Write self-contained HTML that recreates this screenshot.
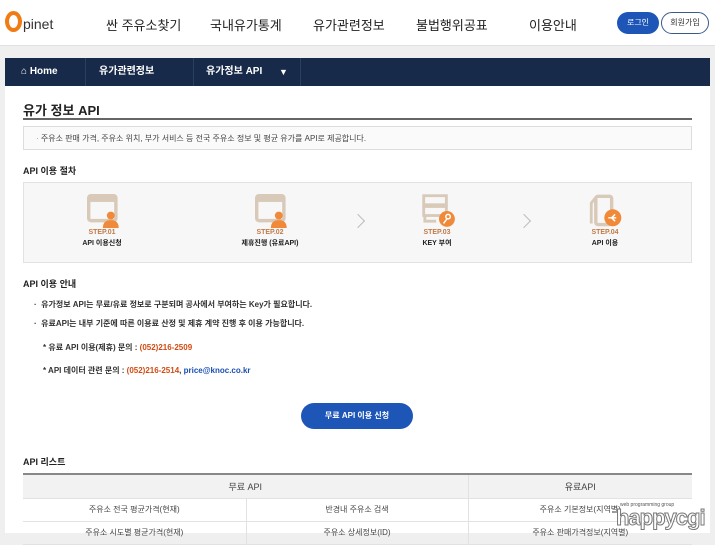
<!DOCTYPE html>
<html><head><meta charset="utf-8"><style>
*{margin:0;padding:0;box-sizing:border-box}
body{width:715px;height:533px;overflow:hidden;background:#efefef;font-family:"Liberation Sans","Noto Sans CJK KR",sans-serif;color:#222;position:relative}
.a{position:absolute}
.hdr{left:0;top:0;width:715px;height:46px;background:#fff;border-bottom:1px solid #e2e2e2}
.menu{top:15px;font-size:13px;color:#222}
.nav{left:5px;top:58px;width:705px;height:28px;background:#172a4a;color:#fff;font-size:10px;font-weight:bold}
.nav span{position:absolute;top:0;line-height:28px;height:28px}
.nav i{position:absolute;top:0;width:1px;height:28px;background:#2b3f60}
.main{left:5px;top:86px;width:705px;height:447px;background:#fff}
.step{position:absolute;width:120px;text-align:center}
.step .s{font-size:7px;color:#c27a47;font-weight:bold;margin-top:3px}
.step .l{font-size:7px;font-weight:bold;color:#222;margin-top:2px}
.chev{position:absolute;width:10px;height:10px;border-top:1px solid #bbb;border-right:1px solid #bbb;transform:rotate(45deg)}
td{border-bottom:1px solid #e2e2e2;border-right:1px solid #e2e2e2;text-align:center;font-size:8px;color:#444;height:23px;padding:0}
td:last-child{border-right:none}
</style></head><body>
<div class="a hdr"></div>
<div class="a" style="left:5px;top:11px;width:17px;height:21px;border:4px solid #f07c14;border-radius:50%"></div>
<div class="a" style="left:23px;top:16px;font-size:14px;color:#333">pinet</div>
<div class="a menu" style="left:106px">싼 주유소찾기</div>
<div class="a menu" style="left:210px">국내유가통계</div>
<div class="a menu" style="left:313px">유가관련정보</div>
<div class="a menu" style="left:416px">불법행위공표</div>
<div class="a menu" style="left:529px">이용안내</div>
<div class="a" style="left:617px;top:12px;width:42px;height:22px;border-radius:11px;background:#1e56b8;color:#fff;font-size:8px;text-align:center;line-height:22px">로그인</div>
<div class="a" style="left:661px;top:12px;width:48px;height:22px;border-radius:11px;border:1px solid #3a5a8a;background:#fff;color:#333;font-size:8px;text-align:center;line-height:20px">회원가입</div>

<div class="a nav">
<span style="left:16px">⌂ Home</span><i style="left:80px"></i>
<span style="left:94px">유가관련정보</span><i style="left:188px"></i>
<span style="left:201px">유가정보 API</span><span style="left:274px;font-size:9px">▼</span><i style="left:295px"></i>
</div>
<div class="a main"></div>

<div class="a" style="left:23px;top:100px;font-size:13px;font-weight:bold;color:#222">유가 정보 API</div>
<div class="a" style="left:23px;top:118px;width:669px;height:2px;background:#666"></div>
<div class="a" style="left:23px;top:126px;width:669px;height:24px;border:1px solid #ddd;background:#fafafa;font-size:8px;color:#444;padding:6px 0 0 12px"><span style="color:#f07c14">·</span> 주유소 판매 가격, 주유소 위치, 부가 서비스 등 전국 주유소 정보 및 평균 유가를 API로 제공합니다.</div>
<div class="a" style="left:23px;top:164px;font-size:9px;font-weight:bold">API 이용 절차</div>
<div class="a" style="left:23px;top:182px;width:669px;height:81px;border:1px solid #e2e2e2;background:#f7f7f7"></div>

<svg class="a" style="left:87px;top:194px" width="34" height="34" viewBox="0 0 30 30"><rect x="1.5" y="1.5" width="24" height="22" rx="2" fill="none" stroke="#d8c9b8" stroke-width="3"/><rect x="1" y="1" width="25" height="6" fill="#d8c9b8"/><circle cx="21" cy="19" r="3.5" fill="#f08a3a"/><path d="M14 30 Q14 23 21 23 Q28 23 28 30Z" fill="#f08a3a"/></svg>
<svg class="a" style="left:255px;top:194px" width="34" height="34" viewBox="0 0 30 30"><rect x="1.5" y="1.5" width="24" height="22" rx="2" fill="none" stroke="#d8c9b8" stroke-width="3"/><rect x="1" y="1" width="25" height="6" fill="#d8c9b8"/><circle cx="21" cy="19" r="3.5" fill="#f08a3a"/><path d="M14 30 Q14 23 21 23 Q28 23 28 30Z" fill="#f08a3a"/></svg>
<svg class="a" style="left:422px;top:194px" width="34" height="34" viewBox="0 0 30 30"><rect x="1.5" y="1.5" width="20" height="8" fill="none" stroke="#d8c9b8" stroke-width="2.5"/><rect x="1.5" y="11" width="20" height="8" fill="none" stroke="#d8c9b8" stroke-width="2.5"/><path d="M2.5 19v5h10" fill="none" stroke="#d8c9b8" stroke-width="2.5"/><circle cx="22" cy="22" r="7" fill="#f08a3a"/><circle cx="23" cy="20" r="2" fill="none" stroke="#fff" stroke-width="1.3"/><path d="M22 22l-3 4" stroke="#fff" stroke-width="1.3"/></svg>
<svg class="a" style="left:589px;top:194px" width="34" height="34" viewBox="0 0 30 30"><path d="M2 26V8l4-5" fill="none" stroke="#d8c9b8" stroke-width="2.5"/><rect x="6" y="2" width="14" height="25" rx="2" fill="none" stroke="#d8c9b8" stroke-width="3"/><circle cx="21" cy="21" r="7.5" fill="#f08a3a"/><path d="M17 21h7M20 21l3-3M20 21l3 3" stroke="#fff" stroke-width="1.3" fill="none"/></svg>

<div class="step" style="left:42px;top:226px"><div class="s">STEP.01</div><div class="l">API 이용신청</div></div>
<div class="step" style="left:210px;top:226px"><div class="s">STEP.02</div><div class="l">제휴진행 (유료API)</div></div>
<div class="step" style="left:377px;top:226px"><div class="s">STEP.03</div><div class="l">KEY 부여</div></div>
<div class="step" style="left:545px;top:226px"><div class="s">STEP.04</div><div class="l">API 이용</div></div>
<div class="chev" style="left:353px;top:216px"></div>
<div class="chev" style="left:519px;top:216px"></div>

<div class="a" style="left:23px;top:277px;font-size:9px;font-weight:bold">API 이용 안내</div>
<div class="a" style="left:34px;top:299px;font-size:8px;font-weight:bold;color:#333">· &nbsp;유가정보 API는 무료/유료 정보로 구분되며 공사에서 부여하는 Key가 필요합니다.</div>
<div class="a" style="left:34px;top:318px;font-size:8px;font-weight:bold;color:#333">· &nbsp;유료API는 내부 기준에 따른 이용료 산정 및 제휴 계약 진행 후 이용 가능합니다.</div>
<div class="a" style="left:43px;top:342px;font-size:8px;font-weight:bold;color:#333">* 유료 API 이용(제휴) 문의 : <span style="color:#d24a12">(052)216-2509</span></div>
<div class="a" style="left:43px;top:365px;font-size:8px;font-weight:bold;color:#333">* API 데이터 관련 문의 : <span style="color:#d24a12">(052)216-2514</span>, <span style="color:#1a4fb0">price@knoc.co.kr</span></div>
<div class="a" style="left:301px;top:403px;width:112px;height:26px;border-radius:13px;background:#1e56b8;color:#fff;font-size:8px;font-weight:bold;text-align:center;line-height:26px">무료 API 이용 신청</div>

<div class="a" style="left:23px;top:455px;font-size:9px;font-weight:bold">API 리스트</div>
<table class="a" style="left:23px;top:473px;width:669px;border-collapse:collapse;border-top:2px solid #888">
<tr style="background:#f2f2f2"><td colspan="2" style="height:24px;font-size:9px">무료 API</td><td style="font-size:9px">유료API</td></tr>
<tr><td style="width:223px">주유소 전국 평균가격(현재)</td><td style="width:222px">반경내 주유소 검색</td><td>주유소 기본정보(지역별)</td></tr>
<tr><td>주유소 시도별 평균가격(현재)</td><td>주유소 상세정보(ID)</td><td>주유소 판매가격정보(지역별)</td></tr>
</table>
<div class="a" style="left:620px;top:502px;font-size:5px;color:#555">web programming group</div>
<div class="a" style="left:616px;top:505px;font-size:22px;font-weight:bold;color:#fff;-webkit-text-stroke:1px #777;letter-spacing:-1px">happycgi</div>
</body></html>
